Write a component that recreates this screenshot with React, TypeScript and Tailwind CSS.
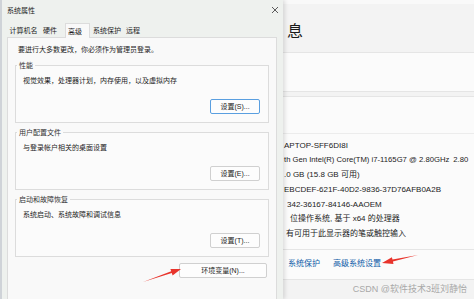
import React from 'react';

const groups = [
    { title: '性能', desc: '视觉效果，处理器计划，内存使用，以及虚拟内存', button: '设置(S)...', primary: true },
    { title: '用户配置文件', desc: '与登录帐户相关的桌面设置', button: '设置(E)...', primary: false },
    { title: '启动和故障恢复', desc: '系统启动、系统故障和调试信息', button: '设置(T)...', primary: false },
];

function WinButton({ label, primary, className }: { label: string; primary?: boolean; className?: string }) {
    return (
        <div
            className={
                'flex h-[15px] items-center justify-center rounded-[2px] border bg-[#fdfdfd] text-[7px] leading-[9px] text-[#1c1c1c] ' +
                (primary ? 'border-[#5a9fe0] ' : 'border-[#d0d0d0] ') +
                (className ?? '')
            }
        >
            {label}
        </div>
    );
}

function SystemPropertiesDialog() {
    return (
        <div className="relative z-10 flex h-[299px] w-[283px] shrink-0 flex-col border-l-2 border-[#cfd3d8] bg-[#eef1ee] shadow-[2px_0_4px_rgba(0,0,0,0.12)]">
            {/* title bar */}
            <div className="flex h-[20px] items-center justify-between pl-[5px] pr-[4px]">
                <span className="text-[7px] leading-[9px] text-[#1c1c1c]">系统属性</span>
                <svg width="8" height="8" viewBox="0 0 8 8" className="text-[#333]">
                    <path d="M1 1 L7 7 M7 1 L1 7" stroke="currentColor" strokeWidth="0.8" />
                </svg>
            </div>

            {/* tabs */}
            <div className="flex h-[17px] items-end pl-[5px] text-[7px] leading-[9px] text-[#1c1c1c]">
                <div className="flex h-[14px] w-[33px] items-center justify-center">计算机名</div>
                <div className="flex h-[14px] w-[20px] items-center justify-center">硬件</div>
                <div className="relative z-10 -mb-px ml-[5px] flex h-[15px] w-[25px] items-center border border-b-0 border-[#dcdcdc] bg-[#f9f9f9] pl-[2px]">
                    高级
                </div>
                <div className="flex h-[14px] w-[34px] items-center justify-center">系统保护</div>
                <div className="flex h-[14px] w-[18px] items-center justify-center">远程</div>
            </div>

            {/* content panel */}
            <div className="ml-[5px] flex w-[270px] flex-1 flex-col border border-b-0 border-[#dcdcdc] bg-[#f9f9f9] pt-[7px] text-[7px] leading-[9px] text-[#1c1c1c]">
                <div className="pl-[10px]">要进行大多数更改，你必须作为管理员登录。</div>

                {groups.map((g, i) => (
                    <fieldset
                        key={g.title}
                        className={'mx-[7px] border border-[#dcdcdc] bg-[#fbfbfb] ' + (i === 0 ? 'mt-[7px]' : 'mt-[5px]')}
                    >
                        <legend className="ml-[1px] px-[2px] text-[#333]">{g.title}</legend>
                        <div className="flex flex-col pb-[8.5px]">
                            <div className="mt-[6px] pl-[7px]">{g.desc}</div>
                            <WinButton label={g.button} primary={g.primary} className="mr-[8px] mt-[13.5px] w-[50px] self-end" />
                        </div>
                    </fieldset>
                ))}

                <WinButton label="环境变量(N)..." className="mr-[9px] mt-[6px] w-[88px] self-end" />
            </div>
        </div>
    );
}

function AboutWindow() {
    return (
        <div className="flex min-w-0 flex-1 flex-col bg-[#f3f3f3] text-[8px] leading-[14.8px] text-[#1b1b1b]">
            <div className="h-[4px] bg-[#f9f9f9]" />
            <div className="h-[48px] pl-[4px] pt-[20px] text-[16px] leading-[16px] text-[#1a1a1a]">息</div>
            <div className="h-[40px] border-y border-[#e5e5e5] bg-[#fbfbfb]" />
            <div className="h-[4px]" />
            <div className="flex flex-col border-y border-[#e5e5e5] bg-[#fbfbfb]">
                <div className="h-[37px] border-b border-[#ececec]" />
                <div className="flex flex-col pb-[7px] pt-[4.5px]">
                    <div className="pl-[1px]">APTOP-SFF6DI8I</div>
                    <div className="whitespace-nowrap pl-[1px] text-[7.7px]">
                        th Gen Intel(R) Core(TM) i7-1165G7 @ 2.80GHz<span className="ml-[4px]">2.80</span>
                    </div>
                    <div className="pl-[1px]">.0 GB (15.8 GB 可用)</div>
                    <div className="pl-[1px]">EBCDEF-621F-40D2-9836-37D76AFB0A2B</div>
                    <div className="pl-[4px]">342-36167-84146-AAOEM</div>
                    <div className="pl-[7px]">位操作系统, 基于 x64 的处理器</div>
                    <div className="pl-[3px]">有可用于此显示器的笔或触控输入</div>
                </div>
            </div>
            <div className="flex h-[30px] items-center gap-[13px] border-b border-[#e5e5e5] bg-[#fbfbfb] pl-[5px] text-[#0f5ca8]">
                <span>系统保护</span>
                <span>高级系统设置</span>
            </div>
            <div className="flex flex-1 items-center justify-end pr-[7px] text-[9px] text-[#a8a8a8]">
                CSDN @软件技术3班刘静怡
            </div>
        </div>
    );
}

export default function App() {
    return (
        <div className="relative flex h-[299px] w-[474px] overflow-hidden bg-[#f3f3f3] font-['Liberation_Sans','Noto_Sans_CJK_SC',sans-serif]">
            <SystemPropertiesDialog />
            <AboutWindow />

            {/* red annotation arrows */}
            <svg className="pointer-events-none absolute inset-0 z-20" width="474" height="299" viewBox="0 0 474 299">
                <polygon points="143,282 171.2,271.3 170.4,268.9 181,269 172.6,275.5 171.8,273.1" fill="#e8342c" />
                <polygon points="418,255 392.5,259.6 391.9,257.2 382,263 393.5,264 392.9,261.6" fill="#e8342c" />
            </svg>
        </div>
    );
}
